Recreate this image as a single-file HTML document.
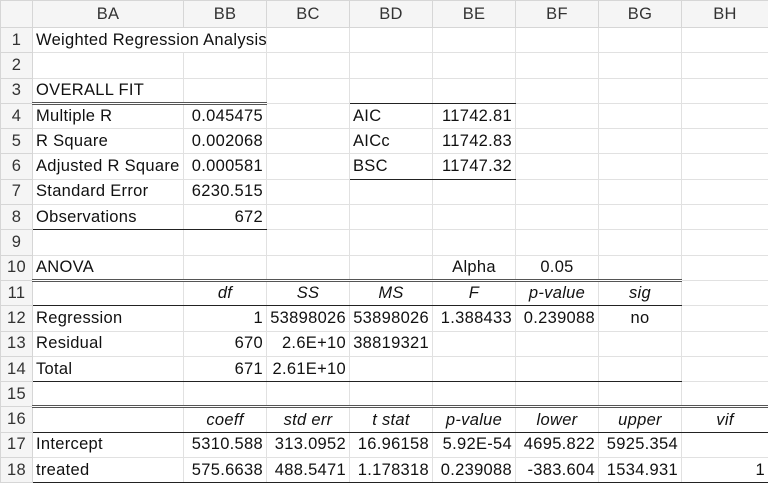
<html><head><style>
body{margin:0;background:#fff;width:768px;height:486px;overflow:hidden}
table{border-collapse:collapse;table-layout:fixed;width:768px;font-family:"Liberation Sans",Arial,sans-serif;font-size:16.5px;letter-spacing:0.3px;color:#111}
td{height:25.3px;border:1px solid #e1e1e1;padding:0 3px;white-space:nowrap;overflow:visible;box-sizing:border-box}
tr.h td{height:27px;background:#f5f5f5;text-align:center;color:#333;border-color:#d6d6d6}
td.rh{background:#f5f5f5;text-align:center;color:#333;border-color:#d6d6d6;padding:0}
.r{text-align:right}.c{text-align:center}.i{font-style:italic}
.d{border-bottom:3px double #555}
.t{border-bottom:1px solid #222}
</style></head><body>
<table>
<colgroup><col style="width:32px"><col style="width:151px"><col style="width:83px"><col style="width:83px"><col style="width:83px"><col style="width:83px"><col style="width:83px"><col style="width:83px"><col style="width:87px"></colgroup>
<tr class="h"><td></td><td>BA</td><td>BB</td><td>BC</td><td>BD</td><td>BE</td><td>BF</td><td>BG</td><td>BH</td></tr>
<tr><td class="rh">1</td><td style="overflow:visible;border-right:1px solid #fff">Weighted Regression Analysis</td><td style="border-left:1px solid #fff"></td><td></td><td></td><td></td><td></td><td></td><td></td></tr>
<tr><td class="rh">2</td><td></td><td></td><td></td><td></td><td></td><td></td><td></td><td></td></tr>
<tr><td class="rh">3</td><td class="d">OVERALL FIT</td><td class="d"></td><td></td><td class="t"></td><td class="t"></td><td></td><td></td><td></td></tr>
<tr><td class="rh">4</td><td>Multiple R</td><td class="r">0.045475</td><td></td><td>AIC</td><td class="r">11742.81</td><td></td><td></td><td></td></tr>
<tr><td class="rh">5</td><td>R Square</td><td class="r">0.002068</td><td></td><td>AICc</td><td class="r">11742.83</td><td></td><td></td><td></td></tr>
<tr><td class="rh">6</td><td>Adjusted R Square</td><td class="r">0.000581</td><td></td><td class="t">BSC</td><td class="r t">11747.32</td><td></td><td></td><td></td></tr>
<tr><td class="rh">7</td><td>Standard Error</td><td class="r">6230.515</td><td></td><td></td><td></td><td></td><td></td><td></td></tr>
<tr><td class="rh">8</td><td class="t">Observations</td><td class="r t">672</td><td></td><td></td><td></td><td></td><td></td><td></td></tr>
<tr><td class="rh">9</td><td></td><td></td><td></td><td></td><td></td><td></td><td></td><td></td></tr>
<tr><td class="rh">10</td><td class="d">ANOVA</td><td class="d"></td><td class="d"></td><td class="d"></td><td class="c d">Alpha</td><td class="c d">0.05</td><td class="d"></td><td></td></tr>
<tr><td class="rh">11</td><td class="t"></td><td class="c i t">df</td><td class="c i t">SS</td><td class="c i t">MS</td><td class="c i t">F</td><td class="c i t">p-value</td><td class="c i t">sig</td><td></td></tr>
<tr><td class="rh">12</td><td>Regression</td><td class="r">1</td><td class="r">53898026</td><td class="r">53898026</td><td class="r">1.388433</td><td class="r">0.239088</td><td class="c">no</td><td></td></tr>
<tr><td class="rh">13</td><td>Residual</td><td class="r">670</td><td class="r">2.6E+10</td><td class="r">38819321</td><td></td><td></td><td></td><td></td></tr>
<tr><td class="rh">14</td><td class="t">Total</td><td class="r t">671</td><td class="r t">2.61E+10</td><td class="t"></td><td class="t"></td><td class="t"></td><td class="t"></td><td></td></tr>
<tr><td class="rh">15</td><td class="d"></td><td class="d"></td><td class="d"></td><td class="d"></td><td class="d"></td><td class="d"></td><td class="d"></td><td class="d"></td></tr>
<tr><td class="rh">16</td><td class="t"></td><td class="c i t">coeff</td><td class="c i t">std err</td><td class="c i t">t stat</td><td class="c i t">p-value</td><td class="c i t">lower</td><td class="c i t">upper</td><td class="c i t">vif</td></tr>
<tr><td class="rh">17</td><td>Intercept</td><td class="r">5310.588</td><td class="r">313.0952</td><td class="r">16.96158</td><td class="r">5.92E-54</td><td class="r">4695.822</td><td class="r">5925.354</td><td></td></tr>
<tr><td class="rh">18</td><td class="t">treated</td><td class="r t">575.6638</td><td class="r t">488.5471</td><td class="r t">1.178318</td><td class="r t">0.239088</td><td class="r t">-383.604</td><td class="r t">1534.931</td><td class="r t">1</td></tr>
</table>
</body></html>
